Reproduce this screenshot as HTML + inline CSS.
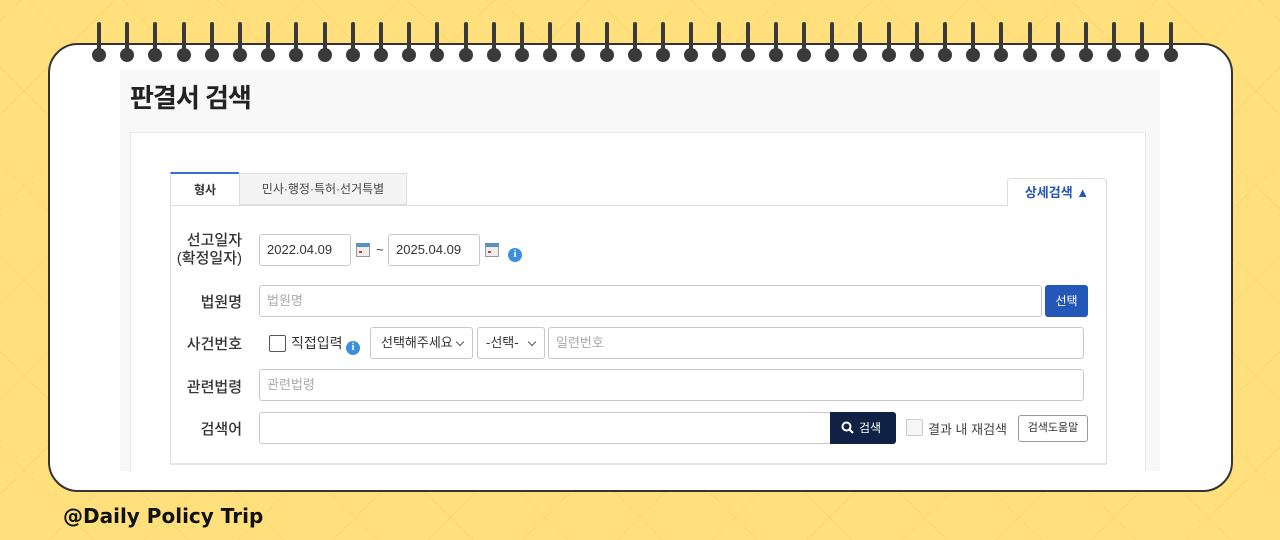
<!DOCTYPE html>
<html><head><meta charset="utf-8"><style>
*{box-sizing:border-box;margin:0;padding:0}
body{width:1280px;height:540px;overflow:hidden;position:relative;font-family:"Liberation Sans","Noto Sans CJK KR",sans-serif;color:#333;
background-color:#ffe07c;
background-image:repeating-linear-gradient(45deg,rgba(255,255,255,0) 0 66px,rgba(240,200,90,.35) 66px 67px),repeating-linear-gradient(-45deg,rgba(255,255,255,0) 0 66px,rgba(240,200,90,.35) 66px 67px);}
.card{position:absolute;left:48px;top:43px;width:1185px;height:449px;background:#fff;border:2px solid #333;border-radius:30px}
.ring{position:absolute;top:22px;width:4px;height:34px;background:#3a3a3a;border-radius:2px}
.ring::after{content:"";position:absolute;left:-5px;bottom:-6px;width:14px;height:14px;border-radius:50%;background:#3a3a3a}
.panel{position:absolute;left:120px;top:70px;width:1040px;height:401px;background:#f8f8f8}
h1{position:absolute;left:130px;top:78px;font-size:26px;font-weight:bold;color:#222;letter-spacing:-1px}
.box{position:absolute;left:130px;top:132px;width:1016px;height:339px;background:#fff;border:1px solid #e6e6e6;border-bottom:none}
.abs{position:absolute}
.inp{position:absolute;height:32px;border:1px solid #c8c8c8;border-radius:3px;background:#fff;font-size:13px;color:#333;padding-left:7px;line-height:30px}
.ph{color:#aaa}
.lbl{position:absolute;width:120px;left:122px;text-align:right;font-size:15px;color:#333;font-weight:500}
.sel{position:absolute;height:32px;border:1px solid #c8c8c8;border-radius:3px;font-size:13px;line-height:30px;padding-left:10px;color:#333}
.sel::after{content:"";position:absolute;right:9px;top:11px;width:5px;height:5px;border-right:1px solid #555;border-bottom:1px solid #555;transform:rotate(45deg)}
.info{position:absolute;width:14px;height:14px;border-radius:50%;background:#3d8fdc;color:#fff;font-size:10px;font-weight:bold;text-align:center;line-height:14px;font-family:"Liberation Serif",serif}
.cal{position:absolute;width:14px;height:14px;border:1px solid #999;background:#eee;border-top:4px solid #5a8fc4}
.cal::after{content:"";position:absolute;left:2px;top:4px;width:3px;height:2px;background:#d33}
</style></head><body>
<div class="card"></div>
<div id="rings"></div>
<div class="panel"></div>
<h1>판결서 검색</h1>
<div class="box"></div>
<div class="abs" style="left:170px;top:172px;width:69px;height:34px;background:#fff;border-top:2px solid #3b6fd0;border-left:1px solid #ddd;font-size:12px;font-weight:bold;text-align:center;line-height:32px">형사</div>
<div class="abs" style="left:239px;top:173px;width:168px;height:32px;background:#f4f4f4;border:1px solid #ddd;font-size:12px;text-align:center;line-height:30px;color:#444">민사·행정·특허·선거특별</div>
<div class="abs" style="left:1007px;top:178px;width:100px;height:28px;background:#fff;border:1px solid #ddd;border-bottom:none;border-radius:4px 4px 0 0;font-size:13px;color:#2457b8;font-weight:bold;text-align:center;line-height:28px">상세검색 ▲</div>
<div class="abs" style="left:170px;top:205px;width:837px;height:1px;background:#ddd"></div>
<div class="abs" style="left:170px;top:205px;width:1px;height:260px;background:#ddd"></div>
<div class="abs" style="left:1106px;top:205px;width:1px;height:260px;background:#ddd"></div>
<div class="abs" style="left:170px;top:463px;width:937px;height:2px;background:#e5e5e5"></div>
<div class="lbl" style="top:232px;line-height:18px">선고일자<br>(확정일자)</div>
<div class="inp" style="left:259px;top:234px;width:92px">2022.04.09</div>
<div class="cal" style="left:356px;top:243px"></div>
<div class="abs" style="left:376px;top:242px;font-size:13px">~</div>
<div class="inp" style="left:388px;top:234px;width:92px">2025.04.09</div>
<div class="cal" style="left:485px;top:243px"></div>
<div class="info" style="left:508px;top:248px">i</div>
<div class="lbl" style="top:291px">법원명</div>
<div class="inp ph" style="left:259px;top:285px;width:783px">법원명</div>
<div class="abs" style="left:1045px;top:285px;width:43px;height:32px;background:#2457b8;border-radius:3px;color:#fff;font-size:12px;text-align:center;line-height:32px">선택</div>
<div class="lbl" style="top:333px">사건번호</div>
<div class="abs" style="left:269px;top:335px;width:17px;height:17px;border:1px solid #555;border-radius:2px"></div>
<div class="abs" style="left:291px;top:333px;font-size:14px">직접입력</div>
<div class="info" style="left:346px;top:341px">i</div>
<div class="sel" style="left:370px;top:327px;width:103px">선택해주세요</div>
<div class="sel" style="left:477px;top:327px;width:68px;padding-left:8px">-선택-</div>
<div class="inp ph" style="left:548px;top:327px;width:536px">일련번호</div>
<div class="lbl" style="top:376px">관련법령</div>
<div class="inp ph" style="left:259px;top:369px;width:825px">관련법령</div>
<div class="lbl" style="top:418px">검색어</div>
<div class="inp" style="left:259px;top:412px;width:572px"></div>
<div class="abs" style="left:830px;top:412px;width:66px;height:32px;background:#0f2144;border-radius:0 3px 3px 0;color:#fff;font-size:12px;line-height:32px;padding-left:11px">
<svg width="13" height="13" viewBox="0 0 13 13" style="vertical-align:-2px;margin-right:5px"><circle cx="5.5" cy="5.5" r="4" fill="none" stroke="#fff" stroke-width="2"/><path d="M8.5 8.5L12 12" stroke="#fff" stroke-width="2.2"/></svg>검색</div>
<div class="abs" style="left:906px;top:419px;width:17px;height:17px;border:1px solid #ccc;border-radius:2px;background:#f6f6f6"></div>
<div class="abs" style="left:928px;top:419px;font-size:13px;color:#444">결과 내 재검색</div>
<div class="abs" style="left:1018px;top:415px;width:70px;height:27px;border:1px solid #999;border-radius:3px;font-size:11px;text-align:center;line-height:25px;color:#333">검색도움말</div>
<div class="abs" style="left:63px;top:504px;font-family:'DejaVu Sans',sans-serif;font-size:20px;font-weight:bold;color:#111;letter-spacing:0">@Daily Policy Trip</div>
<script>
var h='';for(var i=0;i<39;i++){var x=97+i*28.2;h+='<div class="ring" style="left:'+x.toFixed(1)+'px"></div>';}
document.getElementById('rings').innerHTML=h;
</script>
</body></html>
